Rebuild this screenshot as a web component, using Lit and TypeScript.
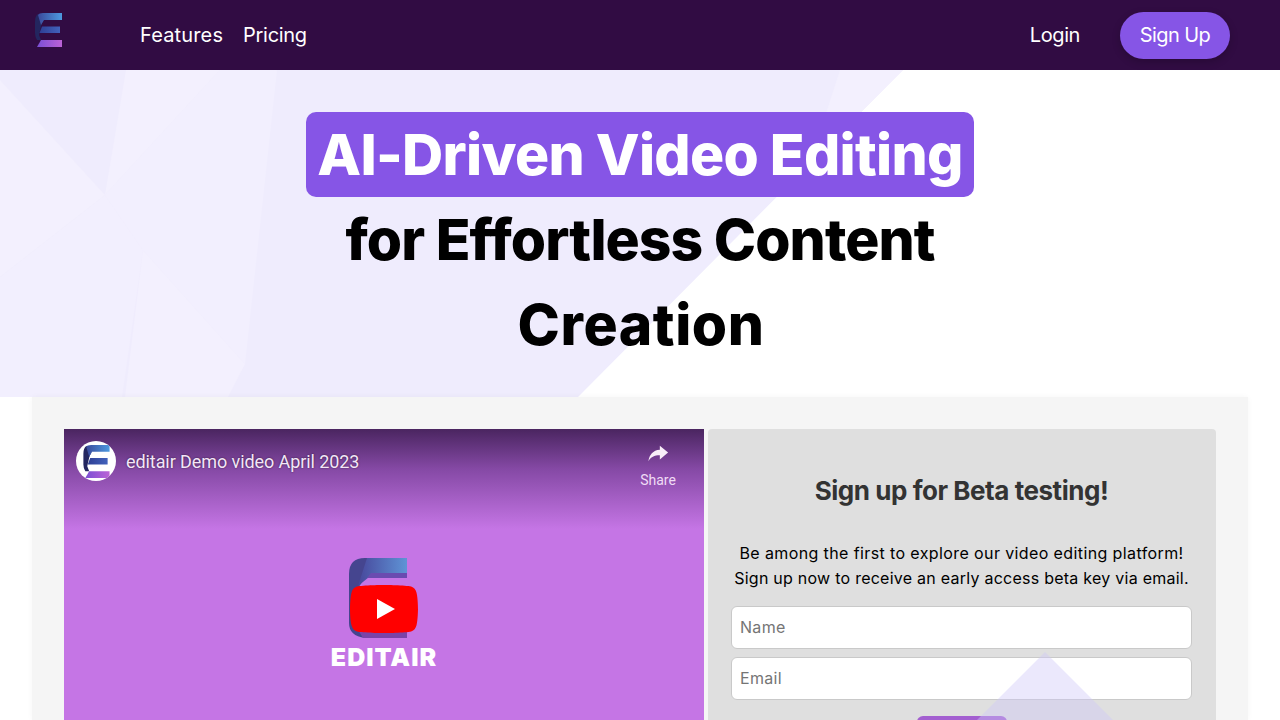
import { LitElement, html, css, svg } from "lit";
import { customElement } from "lit/decorators.js";

const eLogo = (id: string) => svg`
  <defs>
    <linearGradient id="${id}a" x1="0" y1="0" x2="1" y2="0"><stop offset="0" stop-color="#3a4a9c"/><stop offset="1" stop-color="#4d9ae0"/></linearGradient>
    <linearGradient id="${id}b" x1="0" y1="0" x2="1" y2="0"><stop offset="0" stop-color="#7a4fd4"/><stop offset="1" stop-color="#bb62d6"/></linearGradient>
    <linearGradient id="${id}c" x1="0" y1="0" x2="1" y2="0"><stop offset="0" stop-color="#2e3f94"/><stop offset="1" stop-color="#4262bc"/></linearGradient>
  </defs>
  <path d="M1 9 Q1 3 4 1 L10 5 L7 13 L5 22 L7 27 L3 27 Q1 24 1 20 Z" fill="#23265f"/>
  <path d="M4 2 Q5 0 9 0 H28 V7 H10 L7 12 Z" fill="url(#${id}a)"/>
  <path d="M8 13.500 H26 V20 H5.500 Z" fill="url(#${id}c)"/>
  <path d="M7 27 H28 V34 H3 Z" fill="url(#${id}b)"/>`;

@customElement("app-root")
export class AppRoot extends LitElement {
  static styles = css`
    :host { display: block; width: 1280px; height: 720px; overflow: hidden; position: relative; background: #fff; font-family: Inter, "Liberation Sans", sans-serif; }
    .nav { height: 70px; background: #310c43; display: flex; align-items: center; padding: 0 50px 0 34px; box-sizing: border-box; color: #fff; position: relative; z-index: 2; font-size: 20px; }
    .brand { width: 106px; height: 34px; margin-top: -10px; }
    .brand svg { width: 28px; height: 34px; display: block; }
    .links { display: flex; gap: 20px; }
    .features { letter-spacing: 0.15px; }
    .pricing { letter-spacing: -0.3px; }
    .spacer { flex: 1; }
    .login { margin-right: 40px; letter-spacing: -0.4px; }
    .signup { width: 110px; height: 47px; border-radius: 24px; background: #8655e6; display: flex; align-items: center; justify-content: center; box-shadow: 0 3px 8px rgba(0,0,0,.2); letter-spacing: -0.6px; }
    .hero { position: relative; height: 327px; }
    .shape { position: absolute; left: 0; top: 0; width: 903px; height: 327px; }
    .title { position: relative; margin: 0; padding-top: 42px; display: flex; flex-direction: column; align-items: center; font-size: 57px; font-weight: 800; line-height: 85px; color: #000; }
    .hl { background: #8655e6; color: #fff; border-radius: 10px; width: 668px; box-sizing: border-box; text-align: center; white-space: nowrap; letter-spacing: -0.7px; }
    .l2 { letter-spacing: -0.95px; }
    .l3 { letter-spacing: 0.55px; margin-left: 2px; }
    .card { position: relative; margin: 0 32px; height: 323px; background: #f5f5f5; padding: 32px; box-sizing: border-box; display: flex; gap: 4px; box-shadow: 0 0 6px rgba(0,0,0,.04); }
    .video { width: 640px; height: 360px; flex: none; background: #c575e5; position: relative; overflow: hidden; color: #fff; font-family: Roboto, sans-serif; }
    .shade { height: 100px; background: linear-gradient(#4a2560, #8549a5 40%, rgba(197,117,229,0)); position: absolute; left: 0; right: 0; top: 0; }
    .head { position: relative; display: flex; align-items: center; padding: 12px; gap: 10px; font-size: 18px; letter-spacing: -0.08px; color: #f4e6f8; text-shadow: 0 0 2px rgba(0,0,0,.6); }
    .avatar { width: 40px; height: 40px; border-radius: 50%; background: #fff; display: flex; align-items: center; justify-content: center; overflow: hidden; }
    .avatar svg { width: 32px; height: 33px; }
    .share { position: absolute; right: 18px; top: 13px; width: 56px; text-align: center; font-size: 14px; color: #f0dcf5; }
    .share svg { display: block; margin: 0 auto 8px; width: 22px; height: 22px; }
    .vlogo { position: absolute; left: 265px; top: 129px; width: 110px; height: 112px; }
    .bigE { position: absolute; left: 20px; top: 0; width: 60px; height: 80px; }
    .word { position: absolute; left: 0; right: 0; top: 84px; text-align: center; font: 900 25px Inter, sans-serif; letter-spacing: 1px; color: #fff; }
    .yt { position: absolute; left: 286px; top: 156px; width: 68px; height: 48px; }
    .panel { width: 508px; height: 360px; flex: none; background: #dfdfdf; border-radius: 4px; position: relative; padding: 0 24px 0 23px; box-sizing: border-box; overflow: hidden; text-align: center; color: #000; }
    .panel h2 { margin: 0; padding-top: 46px; font-size: 26px; line-height: 32px; font-weight: 700; color: #333; letter-spacing: -0.45px; }
    .panel p { margin: 34px 0 0; font-size: 16px; line-height: 25px; }
    .p1 { letter-spacing: 0.39px; }
    .p2 { letter-spacing: 0.25px; }
    .field { height: 43px; margin-top: 8px; box-sizing: border-box; background: #fff; border: 1px solid #c9c9c9; border-radius: 6px; text-align: left; padding: 0 8px; line-height: 41px; font-size: 16px; color: #757575; letter-spacing: .3px; }
    .form { margin-top: 15px; }
    .btn { margin: 16px auto 0; width: 90px; height: 40px; background: #a35fd0; border-radius: 6px; }
    .tri { position: absolute; left: 0; top: 0; width: 508px; height: 360px; pointer-events: none; }
  `;
  render() {
    return html`
      <div class="nav">
        <div class="brand"><svg viewBox="0 0 28 34">${eLogo("n")}</svg></div>
        <div class="links"><span class="features">Features</span><span class="pricing">Pricing</span></div>
        <div class="spacer"></div>
        <span class="login">Login</span>
        <span class="signup">Sign Up</span>
      </div>
      <div class="hero">
        <svg class="shape" viewBox="0 0 903 327">
          <polygon points="0,0 903,0 578,327 0,327" fill="#efecfd"/>
          <polygon points="0,10 105,125 0,207" fill="#f3f0fe"/>
          <polygon points="126,0 220,0 105,125" fill="#f3f0fe"/>
          <polygon points="0,207 105,125 143,180 122,327 0,327" fill="#f2effe"/>
          <polygon points="220,0 277,0 245,294 143,180 105,125" fill="#f2effe"/>
          <polygon points="143,180 245,294 228,327 125,327" fill="#f3f0fe"/>
          <polygon points="840,0 903,0 810,93" fill="#f3f0fe"/>
        </svg>
        <h1 class="title">
          <span class="hl">AI-Driven Video Editing</span>
          <span class="l2">for Effortless Content</span>
          <span class="l3">Creation</span>
        </h1>
      </div>
      <div class="card">
        <div class="video">
          <div class="shade"></div>
          <div class="head">
            <div class="avatar"><svg viewBox="0 0 28 34">${eLogo("a")}</svg></div>
            <span>editair Demo video April 2023</span>
          </div>
          <div class="share">
            <svg viewBox="0 0 24 24"><path fill="#f8eef8" d="M14 4 L23 11.500 L14 19 V14.500 C8 14.500 4 16.500 1.500 21 C2.500 14 6.500 9 14 8.500 Z"/></svg>
            Share
          </div>
          <div class="vlogo">
            <svg class="bigE" viewBox="0 0 60 80">
              <defs>
                <linearGradient id="bt" x1="0" y1="0" x2="1" y2="0"><stop offset="0" stop-color="#47479b"/><stop offset="1" stop-color="#5f94d6"/></linearGradient>
              </defs>
              <path d="M0 16 Q0 0 16 0 H30 L9 30 V70 L16 80 Q0 78 0 65 Z" fill="#45458f"/>
              <path d="M18 0 H58 V15 H25 L9 28 Z" fill="url(#bt)"/>
              <path d="M22 15 H58 V20 H18 Z" fill="#6a4bb0"/>
              <path d="M8 70 H58 V80 H14 Z" fill="#7a43a8"/>
            </svg>
            <div class="word">EDITAIR</div>
          </div>
          <svg class="yt" viewBox="0 0 68 48">
            <path fill="#f00" d="M66.520 7.740c-.78-2.930-2.490-5.410-5.420-6.190C55.790.13 34 0 34 0S12.210.13 6.900 1.550C3.970 2.330 2.270 4.810 1.480 7.740.06 13.050 0 24 0 24s.06 10.950 1.480 16.260c.78 2.930 2.490 5.410 5.420 6.190C12.210 47.870 34 48 34 48s21.790-.13 27.100-1.550c2.930-.78 4.640-3.260 5.420-6.190C67.940 34.950 68 24 68 24s-.06-10.950-1.480-16.260z"/>
            <path fill="#fff" d="M45 24 27 14v20"/>
          </svg>
        </div>
        <div class="panel">
          <h2>Sign up for Beta testing!</h2>
          <p><span class="p1">Be among the first to explore our video editing platform!</span><br><span class="p2">Sign up now to receive an early access beta key via email.</span></p>
          <div class="form">
            <div class="field">Name</div>
            <div class="field">Email</div>
          </div>
          <div class="btn"></div>
          <svg class="tri" viewBox="0 0 508 360">
            <polygon points="337,223 505,391 169,391" fill="#cfc8f8" fill-opacity=".42"/>
          </svg>
        </div>
      </div>
    `;
  }
}
